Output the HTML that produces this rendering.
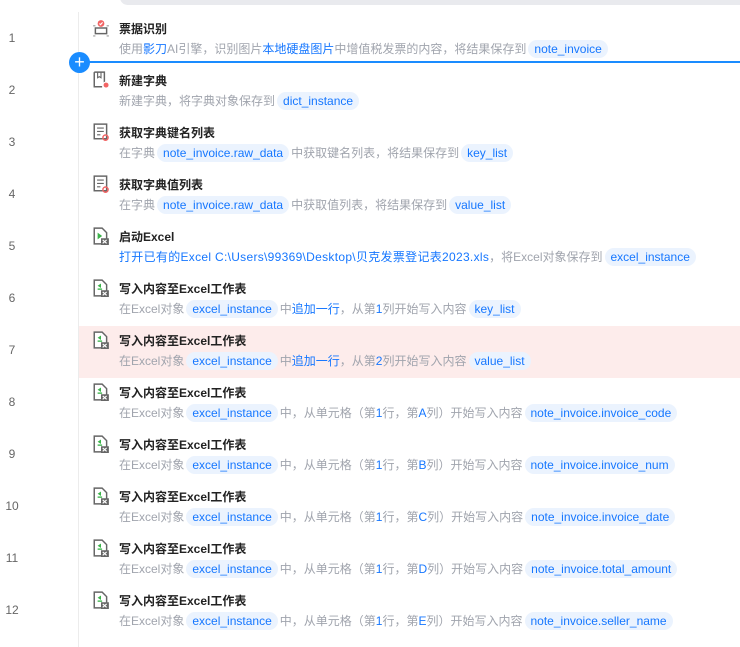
<!DOCTYPE html>
<html><head><meta charset="utf-8"><style>
*{margin:0;padding:0;box-sizing:border-box}
body{width:740px;height:647px;overflow:hidden;background:#fff;font-family:"Liberation Sans","Noto Sans CJK SC",sans-serif;position:relative}
.top{position:absolute;left:120px;top:-10px;width:640px;height:15px;background:#e9eaee;border-radius:8px}
.vl{position:absolute;left:78px;top:12px;width:1px;height:635px;background:#ececec}
.num{position:absolute;left:0;width:24px;text-align:center;font-size:12px;color:#666}
.row{position:absolute;left:79px;width:661px;height:52px}
.row.hl{background:#fdeceb}
.ic{position:absolute;left:13px;top:5px;width:18px;height:18px}
.t{position:absolute;left:40px;top:6px;font-size:12px;font-weight:bold;color:#222;white-space:nowrap}
.s{position:absolute;left:40px;top:26px;font-size:12px;color:#a0a4ad;white-space:nowrap;line-height:18px}
.b{color:#1677ff}
.c{display:inline-block;background:#ebf3fe;color:#1677ff;border-radius:9px;padding:0 6px;height:18px;line-height:18px;margin:0 2px}
.bl{position:absolute;left:79px;top:61px;width:661px;height:2px;background:#1a8cff}
.plus{position:absolute;left:69px;top:52px;width:21px;height:21px;border-radius:50%;background:#1a8cff;color:#fff;font-size:18px;line-height:20px;text-align:center}
</style></head><body>
<div class="top"></div>
<div class="vl"></div>
<svg width="0" height="0" style="position:absolute"><defs>
<g id="xl"><path d="M2 1h7l4 4v10H2z" fill="#fff" stroke="#666" stroke-width="1.3"/><path d="M5 6l3-2v4z" fill="#3bb34a"/><path d="M5 9h4" stroke="#3bb34a" stroke-width="1.2"/><rect x="8" y="10" width="7" height="6" fill="#666"/><path d="M9.5 11.5l3.5 3M13 11.5l-3.5 3" stroke="#fff" stroke-width="1"/></g>
<g id="ls"><rect x="2" y="1" width="11" height="13" fill="#fff" stroke="#666" stroke-width="1.3"/><path d="M4.5 4.5h6M4.5 7.5h6M4.5 10.5h3" stroke="#666" stroke-width="1.1"/><circle cx="12" cy="13" r="2.3" fill="none" stroke="#f26464" stroke-width="1.3"/></g>
</defs></svg>

<div class="num" style="top:31px">1</div><div class="num" style="top:83px">2</div><div class="num" style="top:135px">3</div><div class="num" style="top:187px">4</div><div class="num" style="top:239px">5</div><div class="num" style="top:291px">6</div><div class="num" style="top:343px">7</div><div class="num" style="top:395px">8</div><div class="num" style="top:447px">9</div><div class="num" style="top:499px">10</div><div class="num" style="top:551px">11</div><div class="num" style="top:603px">12</div>

<div class="row" style="top:14px"><svg class="ic" viewBox="0 0 16 16"><circle cx="8" cy="4" r="3" fill="#f26464"/><path d="M6.6 4l1 1 1.8-2" stroke="#fff" stroke-width="1" fill="none"/><rect x="3" y="8" width="10" height="5" fill="none" stroke="#666" stroke-width="1.3"/><path d="M1 6h2M13 6h2M1 15h2M13 15h2" stroke="#999"/></svg><div class="t">票据识别</div><div class="s">使用<span class="b">影刀</span>AI引擎，识别图片<span class="b">本地硬盘图片</span>中增值税发票的内容，将结果保存到<span class="c">note_invoice</span></div></div>
<div class="bl"></div><div class="plus">+</div>

<div class="row" style="top:66px"><svg class="ic" viewBox="0 0 16 16"><path d="M2 1h9v10M2 1v13h7" fill="none" stroke="#666" stroke-width="1.3"/><path d="M5 1v5l1.5-1 1.5 1V1" fill="none" stroke="#666"/><circle cx="12.5" cy="12.5" r="2.7" fill="#f26464" stroke="#fff"/></svg><div class="t">新建字典</div><div class="s">新建字典，将字典对象保存到<span class="c">dict_instance</span></div></div>

<div class="row" style="top:118px"><svg class="ic" viewBox="0 0 16 16"><use href="#ls"/></svg><div class="t">获取字典键名列表</div><div class="s">在字典<span class="c">note_invoice.raw_data</span>中获取键名列表，将结果保存到<span class="c">key_list</span></div></div>

<div class="row" style="top:170px"><svg class="ic" viewBox="0 0 16 16"><use href="#ls"/></svg><div class="t">获取字典值列表</div><div class="s">在字典<span class="c">note_invoice.raw_data</span>中获取值列表，将结果保存到<span class="c">value_list</span></div></div>

<div class="row" style="top:222px"><svg class="ic" viewBox="0 0 16 16"><path d="M2 1h7l4 4v10H2z" fill="#fff" stroke="#666" stroke-width="1.3"/><path d="M5 5l4 3-4 3z" fill="#3bb34a"/><rect x="8" y="10" width="7" height="6" fill="#666"/><path d="M9.5 11.5l3.5 3M13 11.5l-3.5 3" stroke="#fff"/></svg><div class="t">启动Excel</div><div class="s"><span class="b" style="letter-spacing:0.3px">打开已有的Excel C:\Users\99369\Desktop\贝克发票登记表2023.xls</span>，将Excel对象保存到<span class="c">excel_instance</span></div></div>

<div class="row" style="top:274px"><svg class="ic" viewBox="0 0 16 16"><use href="#xl"/></svg><div class="t">写入内容至Excel工作表</div><div class="s">在Excel对象<span class="c">excel_instance</span>中<span class="b">追加一行</span>，从第<span class="b">1</span>列开始写入内容<span class="c">key_list</span></div></div>

<div class="row hl" style="top:326px"><svg class="ic" viewBox="0 0 16 16"><use href="#xl"/></svg><div class="t">写入内容至Excel工作表</div><div class="s">在Excel对象<span class="c">excel_instance</span>中<span class="b">追加一行</span>，从第<span class="b">2</span>列开始写入内容<span class="c">value_list</span></div></div>

<div class="row" style="top:378px"><svg class="ic" viewBox="0 0 16 16"><use href="#xl"/></svg><div class="t">写入内容至Excel工作表</div><div class="s">在Excel对象<span class="c">excel_instance</span>中，从单元格（第<span class="b">1</span>行，第<span class="b">A</span>列）开始写入内容<span class="c">note_invoice.invoice_code</span></div></div>

<div class="row" style="top:430px"><svg class="ic" viewBox="0 0 16 16"><use href="#xl"/></svg><div class="t">写入内容至Excel工作表</div><div class="s">在Excel对象<span class="c">excel_instance</span>中，从单元格（第<span class="b">1</span>行，第<span class="b">B</span>列）开始写入内容<span class="c">note_invoice.invoice_num</span></div></div>

<div class="row" style="top:482px"><svg class="ic" viewBox="0 0 16 16"><use href="#xl"/></svg><div class="t">写入内容至Excel工作表</div><div class="s">在Excel对象<span class="c">excel_instance</span>中，从单元格（第<span class="b">1</span>行，第<span class="b">C</span>列）开始写入内容<span class="c">note_invoice.invoice_date</span></div></div>

<div class="row" style="top:534px"><svg class="ic" viewBox="0 0 16 16"><use href="#xl"/></svg><div class="t">写入内容至Excel工作表</div><div class="s">在Excel对象<span class="c">excel_instance</span>中，从单元格（第<span class="b">1</span>行，第<span class="b">D</span>列）开始写入内容<span class="c">note_invoice.total_amount</span></div></div>

<div class="row" style="top:586px"><svg class="ic" viewBox="0 0 16 16"><use href="#xl"/></svg><div class="t">写入内容至Excel工作表</div><div class="s">在Excel对象<span class="c">excel_instance</span>中，从单元格（第<span class="b">1</span>行，第<span class="b">E</span>列）开始写入内容<span class="c">note_invoice.seller_name</span></div></div>
</body></html>
